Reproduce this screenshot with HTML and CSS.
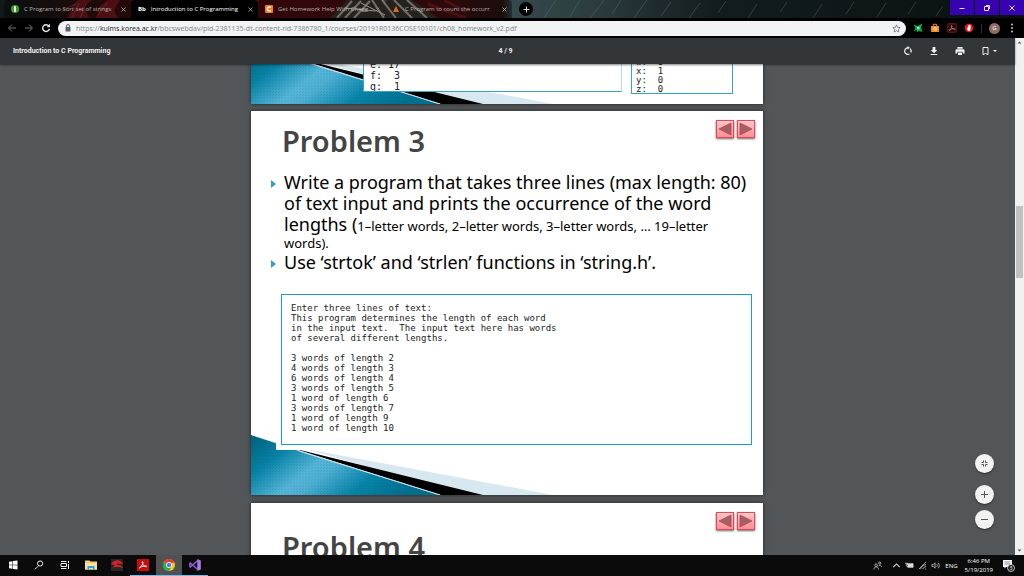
FILE: index.html
```
<!DOCTYPE html>
<html lang="en">
<head>
  <meta charset="UTF-8">
  <meta name="viewport" content="width=device-width, initial-scale=1.0">
  <title>Introduction to C Programming</title>
  <link rel="stylesheet" href="styles.css">
</head>
<body>
  <header class="tabstrip">
    <!-- browser theme artwork -->
    <svg class="theme" viewBox="0 0 1024 18" preserveAspectRatio="none" aria-hidden="true">
      <defs>
        <linearGradient id="sky" x1="0" x2="1" y1="0" y2="0">
          <stop offset="0" stop-color="#10191b"/>
          <stop offset=".1" stop-color="#32100f"/>
          <stop offset=".2" stop-color="#4a0c0d"/>
          <stop offset=".32" stop-color="#4d0d0f"/>
          <stop offset=".44" stop-color="#421011"/>
          <stop offset=".49" stop-color="#2b1414"/>
          <stop offset=".5" stop-color="#36494c"/>
          <stop offset=".58" stop-color="#2c3c3f"/>
          <stop offset=".7" stop-color="#121c1e"/>
          <stop offset="1" stop-color="#0a1012"/>
        </linearGradient>
      </defs>
      <rect width="1024" height="18" fill="url(#sky)"/>
      <path d="M68 18 74 4 78 0h14l-8 6 5 12zM96 18l4-12 8-6h12l-6 10 4 8z" fill="#a01c24" opacity=".6"/>
      <path d="M72 17 79 3M80 18l6-14M98 15l9-12M62 10l14-6" stroke="#d0484c" opacity=".6"/>
      <path d="M330 18 347 0h65l14 10 12 8z" fill="#39342f"/>
      <path d="M337 18 352 1M345 18l16-17M354 18 370 1M372 0l12 18M382 0l14 18M394 0l18 18M407 0l20 18" stroke="#b4aa9c" stroke-width="2"/>
      <path d="M345 8l30 3M361 3l24 12" stroke="#eee3d2"/>
      <path d="M428 4l38 14M444 0l22 12" stroke="#76191b" stroke-width="3"/>
      <path d="M520 15l10-15M544 18l12-18M570 17l10-17M590 18l14-18M612 14l9-14M634 18l13-18M661 16l10-14M689 18l11-15M718 13l8-12M748 18l9-14M780 12l7-10M813 18l9-14M846 14l8-12M877 17l9-14M908 14l8-12M936 16l7-10" stroke="#65777a" opacity=".4"/>
    </svg>
    <nav class="tabs" aria-label="Open tabs">
      <a class="tab" href="#">
        <svg class="fav" viewBox="0 0 8 8"><circle cx="4" cy="4" r="4" fill="#3d9b35"/><rect x="3" y="1" width="2" height="6" rx="1" fill="#eaf5e5"/></svg>
        <span class="tab-title">C Program to Sort set of strings</span>
        <svg class="close" viewBox="0 0 5 5"><path d="M.5.5l4 4M4.5.5l-4 4"/></svg>
      </a>
      <a class="tab current" href="#">
        <b class="fav-bb">Bb</b>
        <span class="tab-title">Introduction to C Programming</span>
        <svg class="close" viewBox="0 0 5 5"><path d="M.5.5l4 4M4.5.5l-4 4"/></svg>
      </a>
      <a class="tab" href="#">
        <svg class="fav" viewBox="0 0 8 8"><rect width="8" height="8" rx="1" fill="#f47b20"/><path d="M5.8 2.6A2 2 0 1 0 5.8 5.4" fill="none" stroke="#fff" stroke-width="1.4"/></svg>
        <span class="tab-title">Get Homework Help With Chegg</span>
        <svg class="close dim" viewBox="0 0 5 5"><path d="M.5.5l4 4M4.5.5l-4 4"/></svg>
      </a>
      <a class="tab" href="#">
        <svg class="fav" viewBox="0 0 8 8"><path d="M4 1l3 6H1z" fill="#d86d20"/></svg>
        <span class="tab-title">C Program to count the occurr</span>
        <svg class="close" viewBox="0 0 5 5"><path d="M.5.5l4 4M4.5.5l-4 4"/></svg>
      </a>
    </nav>
    <button class="new-tab" aria-label="New tab"><svg viewBox="0 0 7 7"><path d="M3.5.5v6M.5 3.5h6" stroke="#ddd"/></svg></button>
    <div class="window-buttons">
      <button aria-label="Minimize"><svg viewBox="0 0 8 8"><path d="M1.5 4.5h5"/></svg></button>
      <button aria-label="Restore"><svg viewBox="0 0 8 8"><path d="M1.5 2.5h4v4h-4zM3 1.5h3.5V5"/></svg></button>
      <button aria-label="Close"><svg viewBox="0 0 8 8"><path d="M1.5 1.5l5 5M6.5 1.5l-5 5"/></svg></button>
    </div>
  </header>

  <div class="navbar">
    <button class="nav-btn dim" aria-label="Back"><svg viewBox="0 0 10 10"><path d="M9 5H2M5 1.5 1.5 5 5 8.5"/></svg></button>
    <button class="nav-btn dim" aria-label="Forward"><svg viewBox="0 0 10 10"><path d="M1 5h7M5 1.5 8.5 5 5 8.5"/></svg></button>
    <button class="nav-btn" aria-label="Reload"><svg viewBox="0 0 10 10"><path d="M7.8 3A3.4 3.4 0 1 0 8.4 6" stroke-width="1.4"/><path d="M9 .8v3.4H5.6z" fill="#e8e8e8" stroke="none"/></svg></button>
    <div class="address">
      <svg class="lock" viewBox="0 0 6 8"><rect x=".5" y="3" width="5" height="4.5" fill="#5f6368"/><path d="M1.5 3V2a1.5 1.5 0 0 1 3 0v1" fill="none" stroke="#5f6368"/></svg>
      <div class="url" contenteditable="true" role="textbox" aria-label="Address">https://<span class="host">kulms.korea.ac.kr</span>/bbcswebdav/pid-2381135-dt-content-rid-7386780_1/courses/20191R0136COSE10101/ch08_homework_v2.pdf</div>
      <button class="star" aria-label="Bookmark"><svg viewBox="0 0 10 10"><path d="M5 1l1.2 2.7 2.9.3-2.2 2 .6 2.9L5 7.4 2.5 8.9 3.1 6 .9 4l2.9-.3z" fill="none" stroke="#5f6368" stroke-width=".8"/></svg></button>
    </div>
    <div class="extensions">
      <button aria-label="Extension"><svg viewBox="0 0 10 10"><path d="M.5 1.5 4.5 3 9.5.5 8 4.5 9.5 9l-3.5-1-2 1.3L3.5 7 .5 8.5 2.5 5z" fill="#12a850"/><circle cx="5.3" cy="5" r="1.2" fill="#bdf0cf"/></svg></button>
      <button aria-label="Shopping"><svg viewBox="0 0 10 10"><path d="M1 3h8v6H1z" fill="#f78c1e"/><path d="M3.3 3V1.3h3.4V3" fill="none" stroke="#f78c1e"/><circle cx="5" cy="5.8" r="1.4" fill="none" stroke="#fff" stroke-width=".8"/></svg></button>
      <button aria-label="Acrobat"><svg viewBox="0 0 10 10"><path d="M.8.8h8.4v8.4H.8z" fill="#210807" stroke="#9a221b" stroke-width=".8"/><path d="M2 7.5C4 6.5 5.3 4 4.8 2.5 4.2 1.5 4 4 5.5 5.5 6.5 6.5 8.5 6.8 8 6c-1-.8-4-.2-6 1.5z" fill="none" stroke="#d8a5a0" stroke-width=".6"/></svg></button>
      <button aria-label="Ad blocker"><svg viewBox="0 0 10 10"><path d="M3.2.8h3.6l2.4 2.4v3.6L6.8 9.2H3.2L.8 6.8V3.2z" fill="#e2181b"/><path d="M3.4 4.5h.8V2.2h.8v-.5h.8v.6h.8v3.4L6 8H4.3L3 6z" fill="#fff"/></svg></button>
      <span class="rule"></span>
      <button class="avatar" aria-label="Profile">G</button>
      <button class="more" aria-label="Menu"><svg viewBox="0 0 4 10"><g fill="#ddd"><circle cx="2" cy="1.5" r=".9"/><circle cx="2" cy="5" r=".9"/><circle cx="2" cy="8.5" r=".9"/></g></svg></button>
    </div>
  </div>

  <div class="viewer">
    <div class="main">
      <div class="pdf-toolbar">
        <h1>Introduction to C Programming</h1>
        <span class="page-no">4 / 9</span>
        <div class="tools">
          <button aria-label="Rotate"><svg viewBox="0 0 10 10"><path d="M5 1.8a3.3 3.3 0 1 0 1.5 6.2M7.8 6.5A3.3 3.3 0 0 0 7 2.6" fill="none" stroke="#f1f1f1" stroke-width="1.2"/><path d="M4.6 0v3.6L6.8 1.8z"/></svg></button>
          <button aria-label="Download"><svg viewBox="0 0 10 10"><path d="M3.6 1h2.8v3H8.3L5 7.2 1.7 4h1.9zM1.7 8h6.6v1.1H1.7z"/></svg></button>
          <button aria-label="Print"><svg viewBox="0 0 10 10"><path d="M2.4 1h5.2v1.8H2.4zM1.8 3.3h6.4a1.3 1.3 0 0 1 1.3 1.3v2.9H7.8V5.8H2.2v1.7H.5V4.6a1.3 1.3 0 0 1 1.3-1.3zM3 6.5h4v2.6H3z"/></svg></button>
          <button class="wide" aria-label="Bookmarks"><svg viewBox="0 0 17 10"><path d="M2 1.5h5v7.2L4.5 7.4 2 8.7z" fill="none" stroke="#f1f1f1"/><path d="M12 4h4l-2 2z"/></svg></button>
        </div>
      </div>

      <div class="pages">
        <section class="slide tail">
          <svg class="swoosh" viewBox="0 0 302 60" aria-hidden="true">
            <defs>
              <linearGradient id="teal" x1="0" y1=".1" x2="1" y2=".5">
                <stop offset="0" stop-color="#006680"/>
                <stop offset=".2" stop-color="#0782a5"/>
                <stop offset=".43" stop-color="#54b5d8"/>
                <stop offset=".52" stop-color="#4fb0d4"/>
                <stop offset=".76" stop-color="#0784a8"/>
                <stop offset="1" stop-color="#007090"/>
              </linearGradient>
              <pattern id="dots" width="3" height="3" patternUnits="userSpaceOnUse"><path d="M0 0h1v1H0zM1 2h1v1H1z" fill="#003d5a" opacity=".1"/></pattern>
              <g id="wave">
                <path d="M50 13 302 60H220z" fill="#d8e8f0"/>
                <path d="M0 0 45 14 232 60H190z" fill="#000"/>
                <path d="M0 0 48 16 188 60H0z" fill="url(#teal)"/>
                <path d="M0 0 48 16 188 60H0z" fill="url(#dots)"/>
                <path d="M48 16 189 60" stroke="#bfe0ec"/>
              </g>
            </defs>
            <use href="#wave"/>
          </svg>
          <div class="counts left"><pre>e: 17
f:  3
g:  1</pre></div>
          <div class="counts right"><pre>w:  0
x:  1
y:  0
z:  0</pre></div>
        </section>

        <section class="slide">
          <svg class="swoosh" viewBox="0 0 302 60" aria-hidden="true"><use href="#wave"/></svg>
          <div class="slide-head">
            <h2>Problem 3</h2>
            <div class="arrows">
              <button aria-label="Previous slide"><svg viewBox="0 0 18 18"><path d="M3 9 15 3v12z"/></svg></button>
              <button aria-label="Next slide"><svg viewBox="0 0 18 18"><path d="M15 9 3 3v12z"/></svg></button>
            </div>
          </div>
          <ul class="task">
            <li><span class="big">Write a program that takes three lines (max length: 80)<br>of text input and prints the occurrence of the word<br>lengths (</span>1–letter words, 2–letter words, 3–letter words, … 19–letter<br>words).</li>
            <li><span class="big">Use ‘strtok’ and ‘strlen’ functions in ‘string.h’.</span></li>
          </ul>
          <div class="sample">
            <pre>Enter three lines of text:
This program determines the length of each word
in the input text.  The input text here has words
of several different lengths.

3 words of length 2
4 words of length 3
6 words of length 4
3 words of length 5
1 word of length 6
3 words of length 7
1 word of length 9
1 word of length 10</pre>
          </div>
        </section>

        <section class="slide">
          <div class="slide-head low">
            <h2>Problem 4</h2>
            <div class="arrows">
              <button aria-label="Previous slide"><svg viewBox="0 0 18 18"><path d="M3 9 15 3v12z"/></svg></button>
              <button aria-label="Next slide"><svg viewBox="0 0 18 18"><path d="M15 9 3 3v12z"/></svg></button>
            </div>
          </div>
        </section>
      </div>

      <div class="zoom">
        <button class="fit" aria-label="Fit to page"><svg viewBox="0 0 9 9"><path d="M3.5 1.5v2h-2M5.5 1.5v2h2M3.5 7.5v-2h-2M5.5 7.5v-2h2"/></svg></button>
        <button aria-label="Zoom in"><svg viewBox="0 0 9 9"><path d="M4.5 1v7M1 4.5h7"/></svg></button>
        <button aria-label="Zoom out"><svg viewBox="0 0 9 9"><path d="M1 4.5h7"/></svg></button>
      </div>
    </div>
    <div class="scrollbar">
      <svg viewBox="0 0 9 9"><path d="M2.5 5.5h4l-2-2z"/></svg>
      <div class="thumb"></div>
      <svg class="down" viewBox="0 0 9 9"><path d="M2.5 3.5h4l-2 2z"/></svg>
    </div>
  </div>

  <footer class="taskbar">
    <div class="apps">
      <button aria-label="Start"><svg viewBox="0 0 12 12"><path d="M2 2.8 5.5 2.2v3.5H2zM6 2.1 10.5 1.5v4.2H6zM2 6.2h3.5v3.6L2 9.2zM6 6.2h4.5v4.3L6 9.9z" fill="#fff"/></svg></button>
      <button aria-label="Search"><svg viewBox="0 0 12 12"><path d="M5 7.3 2 10.3M4.5 4.5a2.6 2.6 0 1 1 5.2 0 2.6 2.6 0 0 1-5.2 0z" fill="none" stroke="#eee"/></svg></button>
      <button aria-label="Task view"><svg viewBox="0 0 12 12"><path d="M2 2.5h5.5M2 9.5h5.5M2 4.5h5.5v3H2zM9.5 2v2M9.5 5v5" fill="none" stroke="#eee"/></svg></button>
      <button aria-label="File Explorer"><svg viewBox="0 0 12 12"><path d="M0 1.5h4.5l1 1H12v8H0z" fill="#f5cf67"/><path d="M0 4h12v6.5H0z" fill="#fbe29a"/><path d="M2.5 10.8V7h7v3.8H7.8V9H4.2v1.8z" fill="#2f9fe0"/></svg></button>
      <button aria-label="Game"><svg viewBox="0 0 12 12"><path d="M0 0h12v12H0z" fill="#2b2526"/><path d="M0 5C2 2 6 0 10 2.5L12 4.5 9 5 7.5 4.3 5 5.5l5 1L12 9l-5-1.2L2 8.5 3.5 6z" fill="#d51f26"/></svg></button>
      <button class="open" aria-label="Acrobat Reader"><svg viewBox="0 0 12 12"><path d="M0 0h12v12H0z" fill="#c80b0b"/><path d="M2.3 9C4.5 8 6.5 4.5 5.8 2.8 5 1.6 5 4.8 6.5 6.5c1.3 1.3 3.6 1.8 3.2.8C9 6.3 5 6.8 2.3 9z" fill="none" stroke="#fff" stroke-width=".9"/></svg></button>
      <button class="open active" aria-label="Chrome"><svg viewBox="0 0 12 12"><circle cx="6" cy="6" r="6" fill="#f9c817"/><path d="M6 6 .8 3A6 6 0 0 1 11.2 3z" fill="#e33b2e"/><path d="M.8 3A6 6 0 0 0 6 12L8.4 7.4 6 6z" fill="#2da94f"/><circle cx="6" cy="6" r="2.9" fill="#fff"/><circle cx="6" cy="6" r="2.2" fill="#3f82ee"/></svg></button>
      <button class="open" aria-label="Visual Studio"><svg viewBox="0 0 12 12"><path d="M.8 3.5 8.8 10.5M.8 8.5 8.8 1.5M1 3.5v5" stroke="#8d5ad1" stroke-width="1.6" fill="none"/><path d="M8.3 0 11.8 1.5v9L8.3 12z" fill="#ad7bea"/></svg></button>
    </div>
    <div class="tray">
      <svg class="people" viewBox="0 0 10 10"><path d="M1 9.5c0-4 5-4 5 0M2 4.7a1.5 1.5 0 1 0 3 0 1.5 1.5 0 0 0-3 0M6.3 2.3a1.2 1.2 0 1 0 2.4 0 1.2 1.2 0 0 0-2.4 0M6.3 5.5C8 4 9.5 5 9.3 6.5"/></svg>
      <svg viewBox="0 0 10 10"><path d="M1.5 6.8 5 3.3l3.5 3.5" stroke-width="1.2"/></svg>
      <svg viewBox="0 0 10 10"><path d="M2 3h7v4H3V5" fill="#ddd"/><path d="M0 2.5h3M1.5 3v3"/></svg>
      <svg viewBox="0 0 10 10"><path d="M1 9 9 1M3 9c0-2 2-4.5 6-5M5.5 9c0-1.5 1.5-2.5 3.5-2.8M8 9h1"/></svg>
      <svg viewBox="0 0 10 10"><path d="M1 4h1.5l2-2v6l-2-2H1zM6.3 3.5c1 1 1 2 0 3M8 2c1.6 2 1.6 4 0 6"/></svg>
      <span class="lang">ENG</span>
      <time class="clock">6:46 PM<br>5/19/2019</time>
      <svg class="notes" viewBox="0 0 13 13"><path d="M1 1h9v7H4L2.5 9.5V8H1z" fill="#fff" stroke="none"/><path d="M2.5 3h6M2.5 5h6" stroke="#555" stroke-width=".7"/><circle cx="9" cy="9" r="3.5" fill="#222"/><text x="9" y="11" text-anchor="middle">3</text></svg>
    </div>
  </footer>
</body>
</html>
```
FILE: styles.css
```
* {
  box-sizing: border-box;
}
body {
  margin: 0;
  height: 100vh;
  display: flex;
  flex-direction: column;
  overflow: hidden;
  background: #000;
  font-family: "Open Sans", "Noto Sans", sans-serif;
}
button {
  border: 0;
  padding: 0;
  background: none;
  font: inherit;
  color: inherit;
  display: flex;
  align-items: center;
  justify-content: center;
  cursor: pointer;
}
svg {
  display: block;
  flex: none;
}
pre {
  margin: 0;
  font-family: "DejaVu Sans Mono", monospace;
}

/* tab strip */
.tabstrip {
  position: relative;
  flex: none;
  height: 18px;
  display: flex;
  align-items: center;
  color: #ccc;
}
.theme {
  position: absolute;
  inset: 0;
  width: 100%;
  height: 100%;
}
.tabs {
  position: relative;
  display: flex;
  height: 100%;
  padding-left: 4px;
}
.tab {
  width: 127px;
  padding: 0 5px 0 7px;
  display: flex;
  align-items: center;
  gap: 5px;
  color: #b9b4b4;
  background: rgba(0, 0, 0, 0.35);
  border-radius: 4px 4px 0 0;
  text-decoration: none;
  font-size: 6px;
}
.tab.current {
  background: #000;
  color: #fff;
}
.tab-title {
  flex: 1;
  white-space: nowrap;
  overflow: hidden;
}
.fav {
  width: 8px;
  height: 8px;
}
.fav-bb {
  font-size: 6px;
}
.close {
  width: 5px;
  height: 5px;
  stroke: #bbb;
  stroke-width: 0.8;
}
.close.dim {
  opacity: 0.4;
}
.new-tab {
  position: relative;
  width: 14px;
  height: 14px;
  margin-left: 7px;
  border-radius: 50%;
  background: #000;
}
.new-tab svg {
  width: 7px;
  height: 7px;
}
.window-buttons {
  position: relative;
  align-self: flex-start;
  margin-left: auto;
  display: flex;
  gap: 1px;
}
.window-buttons button {
  width: 24px;
  height: 15px;
  background: #3703b0;
}
.window-buttons svg {
  width: 8px;
  height: 8px;
  fill: none;
  stroke: #e5dcff;
}

/* address bar */
.navbar {
  flex: none;
  height: 20px;
  padding: 0 7px;
  display: flex;
  align-items: center;
  gap: 7px;
}
.nav-btn svg {
  width: 10px;
  height: 10px;
  fill: none;
  stroke: #e8e8e8;
}
.nav-btn.dim {
  opacity: 0.5;
}
.address {
  flex: 1;
  height: 15px;
  padding: 0 5px 0 7px;
  display: flex;
  align-items: center;
  gap: 5px;
  border-radius: 8px;
  background: #f1f3f4;
}
.lock {
  width: 6px;
  height: 8px;
}
.url {
  flex: 1;
  white-space: nowrap;
  overflow: hidden;
  font-size: 7px;
  color: #80868b;
  outline: none;
}
.host {
  color: #202124;
}
.star svg {
  width: 9px;
  height: 9px;
}
.extensions {
  display: flex;
  align-items: center;
  gap: 7px;
}
.extensions svg {
  width: 10px;
  height: 10px;
}
.rule {
  width: 1px;
  height: 9px;
  background: #333;
}
.extensions .avatar {
  width: 11px;
  height: 11px;
  border-radius: 50%;
  background: #8d6e63;
  color: #fff;
  font-size: 6px;
}

/* pdf viewer */
.viewer {
  flex: 1;
  min-height: 0;
  display: flex;
  background: #525659;
}
.main {
  position: relative;
  flex: 1;
  min-width: 0;
  display: flex;
  flex-direction: column;
}
.pdf-toolbar {
  position: relative;
  z-index: 1;
  flex: none;
  height: 26px;
  padding: 0 17px 0 13px;
  display: grid;
  grid-template-columns: 1fr auto 1fr;
  align-items: center;
  background: #323639;
  color: #f1f1f1;
  font-family: Roboto, sans-serif;
  font-weight: bold;
  font-size: 7px;
  box-shadow: 0 1px 2px rgba(0, 0, 0, 0.5);
}
.pdf-toolbar h1 {
  margin: 0;
  font-size: 7px;
}
.tools {
  display: flex;
  justify-content: flex-end;
  gap: 16px;
}
.tools svg {
  width: 10px;
  height: 10px;
  fill: #f1f1f1;
}
.tools .wide svg {
  width: 17px;
}
.pages {
  flex: 1;
  min-height: 0;
  padding-right: 1px;
  overflow: hidden;
  display: flex;
  flex-direction: column;
  align-items: center;
  gap: 8px;
}
.slide {
  position: relative;
  flex: none;
  width: 512px;
  max-width: 100%;
  min-height: 384px;
  background: #fff;
  box-shadow: 0 0 4px rgba(0, 0, 0, 0.6);
}
.swoosh {
  position: absolute;
  left: 0;
  bottom: 0;
  width: 302px;
  height: 60px;
}
.slide.tail {
  min-height: 0;
  height: 40px;
  margin-bottom: -1px;
  padding: 0 30px 12px 112px;
  display: flex;
  gap: 9px;
  overflow: hidden;
}
.counts {
  position: relative;
  display: flex;
  flex-direction: column;
  justify-content: flex-end;
  overflow: hidden;
  background: #fff;
  color: #222;
  border: solid #3ba5bf;
}
.counts.left {
  flex: 1;
  padding-left: 6px;
  border-width: 0 1px 1px;
  border-right-color: #b5dce6;
}
.counts.left pre {
  font-size: 10px;
  line-height: 11px;
  margin-bottom: -1px;
}
.counts.right {
  width: 102px;
  margin-bottom: -2px;
  padding-left: 4px;
  border-width: 0 1px 1px;
}
.counts.right pre {
  font-size: 9px;
  line-height: 9px;
  margin-bottom: -1px;
}
.slide-head {
  display: flex;
  justify-content: space-between;
  align-items: flex-start;
  padding: 9px 8px 0 31px;
}
.slide-head h2 {
  margin: 0;
  font-family: "Noto Sans", sans-serif;
  font-size: 29px;
  line-height: 42px;
  font-weight: 600;
  color: #444;
}
.slide-head.low h2 {
  padding-top: 14px;
}
.arrows {
  display: flex;
  gap: 3px;
}
.arrows button {
  width: 18px;
  height: 18px;
  border: 1px solid #e2495a;
  background: linear-gradient(#ffc9cb, #ff8f94);
  box-shadow: 0 1px 2px rgba(0, 0, 0, 0.6);
}
.arrows svg {
  width: 18px;
  height: 18px;
  fill: #9b6368;
  stroke: #d8384a;
  stroke-width: 0.8;
}
.task {
  position: relative;
  margin: 10px 0 0;
  padding: 0 0 0 33px;
  list-style: none;
  font-family: "Noto Sans", sans-serif;
  font-size: 13px;
  line-height: 17px;
  color: #000;
  white-space: nowrap;
}
.task .big {
  font-size: 18px;
  line-height: 21px;
}
.task li {
  position: relative;
}
.task li::before {
  content: "";
  position: absolute;
  left: -13px;
  top: 8px;
  border: 4px solid transparent;
  border-left: 5px solid #2f9fc0;
  border-right: 0;
}
.sample {
  position: relative;
  margin: 16px 6px 0 25px;
  padding: 5px;
  background: #fff;
}
.sample pre {
  padding: 8px 9px 11px;
  border: 1px solid #1b9bd0;
  font-size: 9px;
  line-height: 10px;
  color: #222;
}

/* floating zoom buttons */
.zoom {
  position: absolute;
  right: 21px;
  bottom: 26px;
  display: flex;
  flex-direction: column;
  gap: 6px;
}
.zoom button {
  width: 19px;
  height: 19px;
  border-radius: 50%;
  background: #f2f2f2;
  box-shadow: 0 1px 2px rgba(0, 0, 0, 0.5);
}
.zoom .fit {
  margin-bottom: 6px;
}
.zoom svg {
  width: 9px;
  height: 9px;
  fill: none;
  stroke: #555;
}

.scrollbar {
  flex: none;
  width: 9px;
  background: #f1f1f1;
  display: flex;
  flex-direction: column;
}
.scrollbar svg {
  width: 9px;
  height: 9px;
  fill: #505050;
}
.scrollbar .down {
  margin-top: auto;
}
.thumb {
  margin: 159px 1px 0;
  height: 72px;
  background: #c1c1c1;
}

/* taskbar */
.taskbar {
  flex: none;
  height: 21px;
  display: flex;
  justify-content: space-between;
  background: #0b0b0b;
  color: #fff;
}
.apps {
  display: flex;
}
.apps button {
  width: 26px;
  border-bottom: 1px solid transparent;
}
.apps .open {
  border-bottom-color: #76b9ed;
}
.apps .active {
  background: #505152;
}
.apps svg {
  width: 12px;
  height: 12px;
}
.tray {
  display: flex;
  align-items: center;
  gap: 4px;
  padding-right: 9px;
  font-size: 6px;
}
.tray svg {
  width: 9px;
  height: 9px;
  fill: none;
  stroke: #ddd;
  stroke-width: 0.8;
}
.tray .people {
  margin-right: 6px;
}
.lang {
  margin-left: 1px;
}
.clock {
  margin-left: 3px;
  line-height: 9px;
  text-align: center;
}
.tray .notes {
  margin-left: 5px;
  width: 13px;
  height: 13px;
}
.notes text {
  font-size: 5px;
  fill: #fff;
  stroke: none;
}
```
